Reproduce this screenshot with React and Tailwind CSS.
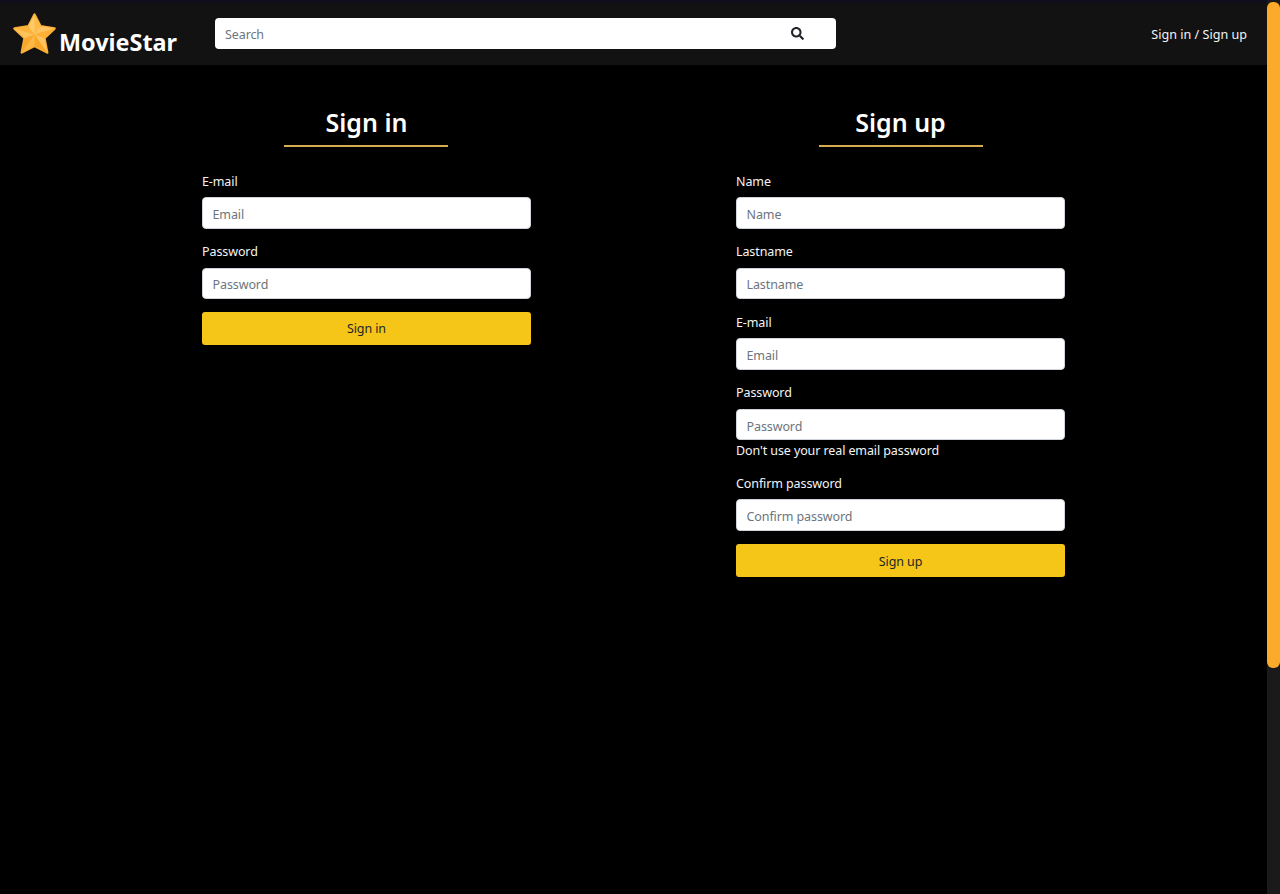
import React from "react";
import { FaSearch } from "react-icons/fa";

function Star() {
  return (
    <svg width="44" height="42" viewBox="0 0 44 42" className="shrink-0">
      <path d="M21.5 1.5 L27.5 13.2 L41.5 15.6 L31.4 25.2 L34.2 39.5 L21.5 32.8 L8.8 39.5 L11.6 25.2 L1.5 15.6 L15.5 13.2 Z" fill="#fcb23a" stroke="#fbae33" strokeWidth="2.5" strokeLinejoin="round" />
      <path d="M21.5 1.5 L27.5 13.2 L21.5 21.5 Z" fill="#fdbb4c" />
      <path d="M41.5 15.6 L27.5 13.2 L21.5 21.5 Z" fill="#ffc462" />
      <path d="M41.5 15.6 L31.4 25.2 L21.5 21.5 Z" fill="#fdb137" />
      <path d="M34.2 39.5 L31.4 25.2 L21.5 21.5 Z" fill="#fec35e" />
      <path d="M34.2 39.5 L21.5 32.8 L21.5 21.5 Z" fill="#f9a82a" />
      <path d="M8.8 39.5 L21.5 32.8 L21.5 21.5 Z" fill="#fdb846" />
      <path d="M8.8 39.5 L11.6 25.2 L21.5 21.5 Z" fill="#faa82b" />
      <path d="M1.5 15.6 L11.6 25.2 L21.5 21.5 Z" fill="#fec25c" />
      <path d="M1.5 15.6 L15.5 13.2 L21.5 21.5 Z" fill="#fdb33c" />
      <path d="M21.5 1.5 L15.5 13.2 L21.5 21.5 Z" fill="#ffca6c" />
    </svg>
  );
}

function Field({ label, placeholder, hint, spacing = "mb-[13.6px]" }) {
  return (
    <div className={spacing}>
      <label className="block h-[21px] mb-[4.5px] text-[12.5px] tracking-[-0.1px] leading-[19px] text-[#f4f4f4]">{label}</label>
      <input
        placeholder={placeholder}
        className="block w-full h-[31.5px] pl-[9.5px] pr-[10px] pt-[3px] bg-white rounded-[4px] border border-[#ced4da] text-[12.5px] tracking-[-0.1px] text-[#212529] placeholder:text-[#6c757d] outline-none"
      />
      {hint && <p className="h-[20px] text-[12.5px] tracking-[-0.1px] leading-[21px] text-[#f4f4f4]">{hint}</p>}
    </div>
  );
}

function Column({ title, children, button, rule }) {
  return (
    <section className="w-[329px]">
      <h2 className="h-[36px] text-center text-[25px] leading-[34px] font-semibold text-white">{title}</h2>
      <div className={`w-[164px] h-[2px] mt-[4px] mb-[24.5px] bg-[#d8ab4e] ${rule}`} />
      {children}
      <button className="block w-full h-[33px] pt-[2px] bg-[#f5c518] rounded-[3px] text-[12.5px] tracking-[-0.1px] text-[#212529]">{button}</button>
    </section>
  );
}

export default function App() {
  return (
    <div className="flex h-[894px] overflow-hidden bg-black font-['Noto_Sans','Open_Sans',sans-serif]">
      <div className="flex-1 min-w-0">
        <header className="flex items-center h-[65px] bg-[#121212] border-t-[3px] border-[#0f0e1e] pl-[13px] pr-[20px]">
          <a className="flex items-end w-[202px] shrink-0">
            <Star />
            <span className="ml-[2px] mb-[-2px] text-[23.4px] leading-[30px] font-bold text-white">MovieStar</span>
          </a>
          <div className="flex items-center w-[621px] h-[31px] -mt-[1px] bg-white rounded-[4px] pl-[10px] pr-[32px]">
            <input placeholder="Search" className="flex-1 min-w-0 pt-[3px] text-[12.5px] tracking-[-0.1px] text-[#212529] placeholder:text-[#6c757d] outline-none bg-transparent" />
            <FaSearch className="text-[13px] text-[#212529]" />
          </div>
          <a className="ml-auto mt-[3px] text-[12.6px] text-[#f4f4f4]">Sign in / Sign up</a>
        </header>
        <main className="flex justify-between w-[863px] mx-auto pt-[40px]">
          <Column title="Sign in" button="Sign in" rule="ml-[82px]">
            <Field label="E-mail" placeholder="Email" />
            <Field label="Password" placeholder="Password" spacing="mb-[12.5px]" />
          </Column>
          <Column title="Sign up" button="Sign up" rule="ml-[83px]">
            <Field label="Name" placeholder="Name" />
            <Field label="Lastname" placeholder="Lastname" />
            <Field label="E-mail" placeholder="Email" />
            <Field label="Password" placeholder="Password" hint="Don't use your real email password" />
            <Field label="Confirm password" placeholder="Confirm password" spacing="mb-[13.5px]" />
          </Column>
        </main>
      </div>
      <aside className="w-[13px] shrink-0 bg-[#1a1a1a] pt-[2px]">
        <div className="h-[666px] bg-[#fcaa2a] rounded-[6px]" />
      </aside>
    </div>
  );
}
